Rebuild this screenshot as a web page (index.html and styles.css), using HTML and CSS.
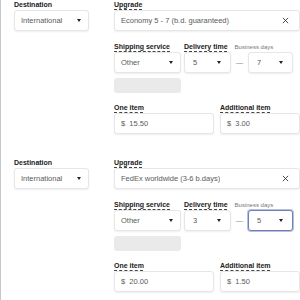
FILE: index.html
```html
<!DOCTYPE html>
<html lang="en">
<head>
  <meta charset="UTF-8" />
  <meta name="viewport" content="width=device-width, initial-scale=1.0" />
  <title>Shipping upgrades</title>
  <link rel="stylesheet" href="styles.css">
</head>
<body>
  <div class="page">
    <section class="rule">
      <div class="dest">
        <div class="label">Destination</div>
        <div class="field select">International <span class="caret"></span></div>
      </div>
      <div class="details">
        <div class="label"><span class="tip">Upgrade</span></div>
        <div class="field upgrade">Economy 5 - 7 (b.d. guaranteed)
          <svg class="clear" viewBox="0 0 8 8" width="7" height="7"><path d="M1 1L7 7M7 1L1 7" stroke="#333" stroke-width="1" fill="none"/></svg>
        </div>
        <div class="row">
          <div class="service">
            <div class="label"><span class="tip">Shipping service</span></div>
            <div class="field select">Other <span class="caret"></span></div>
            <div class="blank"></div>
          </div>
          <div class="delivery">
            <div class="label"><span class="tip">Delivery time</span> <span class="hint">Business days</span></div>
            <div class="range">
              <div class="field select min">5 <span class="caret"></span></div>
              <span class="dash">—</span>
              <div class="field select max">7 <span class="caret"></span></div>
            </div>
          </div>
        </div>
        <div class="row prices">
          <div class="price one">
            <div class="label"><span class="tip">One item</span></div>
            <div class="field">$&nbsp; 15.50</div>
          </div>
          <div class="price more">
            <div class="label"><span class="tip">Additional item</span></div>
            <div class="field">$&nbsp; 3.00</div>
          </div>
        </div>
      </div>
    </section>

    <section class="rule">
      <div class="dest">
        <div class="label">Destination</div>
        <div class="field select">International <span class="caret"></span></div>
      </div>
      <div class="details">
        <div class="label"><span class="tip">Upgrade</span></div>
        <div class="field upgrade">FedEx worldwide (3-6 b.days)
          <svg class="clear" viewBox="0 0 8 8" width="7" height="7"><path d="M1 1L7 7M7 1L1 7" stroke="#333" stroke-width="1" fill="none"/></svg>
        </div>
        <div class="row">
          <div class="service">
            <div class="label"><span class="tip">Shipping service</span></div>
            <div class="field select">Other <span class="caret"></span></div>
            <div class="blank"></div>
          </div>
          <div class="delivery">
            <div class="label"><span class="tip">Delivery time</span> <span class="hint">Business days</span></div>
            <div class="range">
              <div class="field select min">3 <span class="caret"></span></div>
              <span class="dash">—</span>
              <div class="field select max focused">5 <span class="caret"></span></div>
            </div>
          </div>
        </div>
        <div class="row prices">
          <div class="price one">
            <div class="label"><span class="tip">One item</span></div>
            <div class="field">$&nbsp; 20.00</div>
          </div>
          <div class="price more">
            <div class="label"><span class="tip">Additional item</span></div>
            <div class="field">$&nbsp; 1.50</div>
          </div>
        </div>
      </div>
    </section>
  </div>
</body>
</html>
```

FILE: styles.css
```css
body { margin: 0; font-family: 'Liberation Sans', Arial, sans-serif; background: #fff; overflow: hidden; }
.page { border-left: 1px solid #c8c8c8; padding-left: 13px; min-height: 300px; }
.rule { display: grid; grid-template-columns: 75px 186px; column-gap: 25px; margin-bottom: 24px; }
.label { font-size: 7px; font-weight: bold; color: #222; height: 10px; line-height: 9px; white-space: nowrap; }
.tip { text-decoration: underline dashed #444; text-underline-offset: 2px; text-decoration-thickness: 1px; }
.hint { font-size: 6px; font-weight: normal; color: #777; margin-left: 5px; }
.field { box-sizing: border-box; height: 21px; border: 1px solid #e6e6e6; border-radius: 3px; box-shadow: 0 1px 2px rgba(0,0,0,0.07); background: #fff; font-size: 7.5px; color: #5a5a5a; display: flex; align-items: center; padding: 0 6px; position: relative; white-space: nowrap; }
.select { justify-content: space-between; }
.caret { width: 0; height: 0; border-left: 2.5px solid transparent; border-right: 2.5px solid transparent; border-top: 3px solid #222; margin-right: 1px; }
.upgrade { justify-content: space-between; padding-right: 10px; }
.row { display: flex; margin-top: 11px; }
.service { width: 67px; }
.blank { height: 15px; margin-top: 5px; background: #eaeaea; border-radius: 3px; }
.delivery { margin-left: 3px; }
.range { display: flex; align-items: center; }
.min { width: 47px; padding-left: 8px; padding-right: 8px; }
.max { width: 45px; padding-left: 8px; padding-right: 8px; }
.dash { width: 17px; text-align: center; font-size: 7px; color: #888; }
.focused { border-color: #6f80b8; box-shadow: 0 0 0 1px #b7c0e2; }
.prices { margin-top: 10px; }
.one { width: 100px; }
.more { flex: 1; margin-left: 6px; }
```
